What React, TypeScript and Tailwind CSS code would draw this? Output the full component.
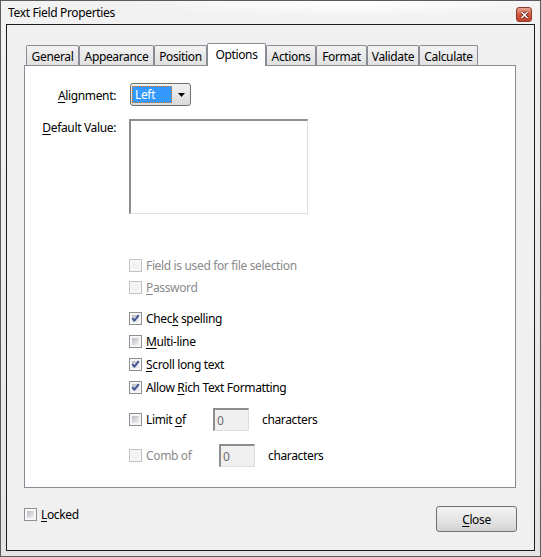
import React from "react"

function Key({ children }: { children: React.ReactNode }) {
  return <span className="underline underline-offset-[2px] decoration-[1px]">{children}</span>
}

function CheckBox({ checked = false, disabled = false }: { checked?: boolean; disabled?: boolean }) {
  return (
    <span
      className={`relative flex w-[13px] h-[13px] shrink-0 border p-[2px] bg-[#f7f7f7] ${
        disabled ? "border-[#c2c2c2]" : "border-[#8e8f8f]"
      }`}
    >
      <span
        className={`block w-full h-full ${
          disabled ? "bg-[#f2f2f2]" : "bg-linear-to-br from-[#b8bcc2] to-[#f2f2f2]"
        }`}
      />
      {checked && (
        <svg className="absolute left-0 top-0" width="11" height="11" viewBox="0 0 11 11">
          <path d="M2.2 5.2 L4.4 7.6 L8.8 2.2" fill="none" stroke="#3d5592" strokeWidth="1.9" />
        </svg>
      )}
    </span>
  )
}

function Option({
  label,
  checked,
  disabled,
  className = "",
}: {
  label: React.ReactNode
  checked?: boolean
  disabled?: boolean
  className?: string
}) {
  return (
    <div className={`flex items-center gap-[4px] h-[17px] ${className}`}>
      <CheckBox checked={checked} disabled={disabled} />
      <span className={disabled ? "text-[#8a8a8a]" : "text-black"}>{label}</span>
    </div>
  )
}

function NumBox() {
  return (
    <div className="w-[36px] h-[23px] shrink-0 bg-[#f0f0f0] border-t-2 border-l-2 border-r border-b border-t-[#8d8d8d] border-l-[#8d8d8d] border-r-[#dedede] border-b-[#dedede] pl-[2px] flex items-center text-[#6d6d6d]">
      0
    </div>
  )
}

const tabs: [string, number][] = [
  ["General", 53],
  ["Appearance", 75],
  ["Position", 53],
  ["Options", 59],
  ["Actions", 50],
  ["Format", 51],
  ["Validate", 52],
  ["Calculate", 59],
]

export default function App() {
  return (
    <div className="w-[541px] h-[557px] flex flex-col border border-[#5b5b5b] bg-linear-to-b from-[#f2f2f2] to-[#e4e4e4] font-['Noto_Sans',sans-serif] text-[12px] leading-[15px] tracking-[-0.35px] text-black select-none">
      {/* title bar */}
      <div className="h-[23px] flex items-center pl-[7px] pr-[8px] bg-[radial-gradient(ellipse_at_65%_10%,#ffffff_0%,rgba(255,255,255,0)_45%)]">
        <span className="flex-1 text-[12px]">Text Field Properties</span>
        <div className="w-[16px] h-[15px] mt-[4px] rounded-[3px] border border-[#8b3a2c] bg-linear-to-b from-[#e8a493] via-[#d2583f] to-[#c2412a] flex items-center justify-center">
          <svg width="9" height="8" viewBox="0 0 9 8">
            <path d="M1.5 1 L7.5 7 M7.5 1 L1.5 7" stroke="#5a1f14" strokeWidth="3" />
            <path d="M1.5 1 L7.5 7 M7.5 1 L1.5 7" stroke="#ffffff" strokeWidth="1.6" />
          </svg>
        </div>
      </div>

      {/* client area */}
      <div className="flex-1 mx-[5px] mb-[5px] border border-[#1c1c1c] bg-[#f0f0f0] pt-[18px] pl-[17px] pr-[18px] flex flex-col">
        {/* tabs */}
        <div className="relative z-10 flex items-end h-[23px] -mb-px ml-[2px]">
          {tabs.map(([name, w]) =>
            name === "Options" ? (
              <div
                key={name}
                style={{ width: w }}
                className="h-[23px] shrink-0 bg-white border border-b-0 border-[#898c95] rounded-t-[2px] flex justify-center pt-[3px]"
              >
                {name}
              </div>
            ) : (
              <div
                key={name}
                style={{ width: w }}
                className="h-[20px] mb-px shrink-0 bg-linear-to-b from-[#f3f3f3] to-[#e0e0e0] border border-b-0 border-[#898c95] rounded-t-[2px] flex justify-center pt-[3px]"
              >
                {name}
              </div>
            )
          )}
        </div>

        {/* tab panel */}
        <div className="h-[423px] bg-white border border-[#898c95] flex flex-col pt-[17px]">
          <div className="flex items-center">
            <div className="w-[91px] text-right pt-px">
              <Key>A</Key>lignment:
            </div>
            <div className="ml-[14px] w-[61px] h-[23px] rounded-[3px] border border-[#707070] bg-linear-to-b from-[#f2f2f2] to-[#d9d9d9] flex items-center pl-[1px]">
              <div className="w-[40px] h-[17px] bg-[#3399ff] outline outline-1 outline-dotted outline-[#e0761e] -outline-offset-1 text-white pl-[3px] flex items-center">
                Left
              </div>
              <div className="flex-1 flex justify-center">
                <svg width="7" height="4" viewBox="0 0 7 4">
                  <path d="M0 0 H7 L3.5 4 Z" fill="#000" />
                </svg>
              </div>
            </div>
          </div>

          <div className="flex items-start mt-[13px]">
            <div className="w-[91px] text-right pt-[1px]">
              <Key>D</Key>efault Value:
            </div>
            <div className="ml-[13px] w-[179px] h-[95px] bg-white border-t-2 border-l-2 border-r border-b border-t-[#8d8d8d] border-l-[#8d8d8d] border-r-[#e0e0e0] border-b-[#e0e0e0]" />
          </div>

          <div className="ml-[104px] mt-[43px] flex flex-col">
            <Option disabled label="Field is used for file selection" />
            <Option
              disabled
              className="mt-[5px]"
              label={
                <>
                  <Key>P</Key>assword
                </>
              }
            />
            <Option
              checked
              className="mt-[14px]"
              label={
                <>
                  Chec<Key>k</Key> spelling
                </>
              }
            />
            <Option
              className="mt-[6px]"
              label={
                <>
                  <Key>M</Key>ulti-line
                </>
              }
            />
            <Option
              checked
              className="mt-[6px]"
              label={
                <>
                  <Key>S</Key>croll long text
                </>
              }
            />
            <Option
              checked
              className="mt-[6px]"
              label={
                <>
                  Allow <Key>R</Key>ich Text Formatting
                </>
              }
            />

            <div className="flex items-center mt-[12px]">
              <Option
                className="w-[84px]"
                label={
                  <>
                    Limit <Key>o</Key>f
                  </>
                }
              />
              <NumBox />
              <span className="ml-[13px]">characters</span>
            </div>

            <div className="flex items-center mt-[13px]">
              <Option disabled className="w-[90px]" label="Comb of" />
              <NumBox />
              <span className="ml-[13px]">characters</span>
            </div>
          </div>
        </div>

        {/* bottom row */}
        <div className="flex items-start justify-between mt-[18px] -mr-px">
          <div className="flex items-center gap-[4px] h-[15px] mt-px">
            <CheckBox />
            <span>
              <Key>L</Key>ocked
            </span>
          </div>
          <button className="w-[81px] h-[26px] rounded-[3px] border border-[#707070] bg-linear-to-b from-[#f2f2f2] via-[#e6e6e6] to-[#d2d2d2] flex items-center justify-center">
            <Key>C</Key>lose
          </button>
        </div>
      </div>
    </div>
  )
}
